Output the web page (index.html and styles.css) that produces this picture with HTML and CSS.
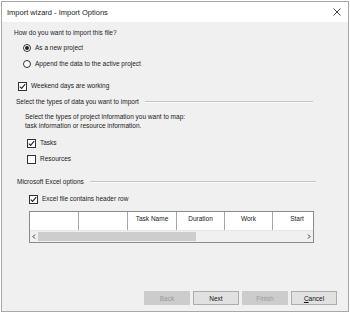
FILE: index.html
```html
<!DOCTYPE html>
<html>
<head>
<meta charset="utf-8">
<link rel="stylesheet" href="styles.css">
</head>
<body>
<div class="window">
  <div class="titlebar">
    <span class="title">Import wizard - Import Options</span>
    <svg class="close" width="8" height="8" viewBox="0 0 8 8"><path d="M0.5 0.5 L7.5 7.5 M7.5 0.5 L0.5 7.5" stroke="#444" stroke-width="1" fill="none"/></svg>
  </div>
  <div class="content">
    <div class="row heading">How do you want to import this file?</div>
    <div class="row opt r1"><span class="radio checked"></span><span>As a new project</span></div>
    <div class="row opt r2"><span class="radio"></span><span>Append the data to the active project</span></div>
    <div class="row opt weekend"><span class="check"><svg width="7" height="7" viewBox="0 0 7 7"><path d="M0.8 3.6 L2.6 5.4 L6.2 1.2" stroke="#222" stroke-width="1.1" fill="none"/></svg></span><span>Weekend days are working</span></div>
    <div class="row section s1"><span>Select the types of data you want to import</span><span class="rule"></span></div>
    <p class="para">Select the types of project information you want to map:<br>task information or resource information.</p>
    <div class="row opt tasks"><span class="check"><svg width="7" height="7" viewBox="0 0 7 7"><path d="M0.8 3.6 L2.6 5.4 L6.2 1.2" stroke="#222" stroke-width="1.1" fill="none"/></svg></span><span>Tasks</span></div>
    <div class="row opt resources"><span class="check"></span><span>Resources</span></div>
    <div class="row section s2"><span>Microsoft Excel options</span><span class="rule"></span></div>
    <div class="row opt excel"><span class="check"><svg width="7" height="7" viewBox="0 0 7 7"><path d="M0.8 3.6 L2.6 5.4 L6.2 1.2" stroke="#222" stroke-width="1.1" fill="none"/></svg></span><span>Excel file contains header row</span></div>
    <div class="grid">
      <div class="grid-head">
        <div class="cell c1"></div>
        <div class="cell c2"></div>
        <div class="cell c3">Task Name</div>
        <div class="cell c4">Duration</div>
        <div class="cell c5">Work</div>
        <div class="cell c6">Start</div>
      </div>
      <div class="hscroll">
        <span class="arrow"><svg width="4" height="5" viewBox="0 0 4 5"><path d="M3 0.5 L1 2.5 L3 4.5" stroke="#333" stroke-width="1" fill="none"/></svg></span>
        <div class="track"><div class="thumb"></div></div>
        <span class="arrow"><svg width="4" height="5" viewBox="0 0 4 5"><path d="M1 0.5 L3 2.5 L1 4.5" stroke="#333" stroke-width="1" fill="none"/></svg></span>
      </div>
    </div>
    <div class="buttons">
      <button class="btn disabled">Back</button>
      <button class="btn">Next</button>
      <button class="btn disabled">Finish</button>
      <button class="btn"><u>C</u>ancel</button>
    </div>
  </div>
</div>
</body>
</html>
```
FILE: styles.css
```css
html, body {
  margin: 0;
  padding: 0;
  background: #ffffff;
}
body {
  font-family: "Liberation Sans", Arial, sans-serif;
  font-size: 6.5px;
  color: #1a1a1a;
}
.window {
  margin: 1px 0 0 1px;
  width: 346px;
  height: 309px;
  border: 1px solid #a8a8a8;
  display: flex;
  flex-direction: column;
  background: #f0f0f0;
}
.titlebar {
  height: 20px;
  background: #ffffff;
  display: flex;
  align-items: center;
  justify-content: space-between;
  padding: 0 7px 0 5px;
  flex: none;
}
.title {
  font-size: 7.5px;
  color: #222;
}
.close {
  display: block;
}
.content {
  flex: 1;
  display: flex;
  flex-direction: column;
  padding: 5px 0 6px 0;
}
.row {
  height: 12px;
  line-height: 12px;
  display: flex;
  align-items: center;
  white-space: nowrap;
}
.heading {
  margin-left: 12px;
  color: #1c1c30;
}
.opt > span:last-child {
  margin-left: 4px;
}
.r1 { margin-top: 3px; margin-left: 21px; }
.r2 { margin-top: 4px; margin-left: 21px; }
.weekend { margin-top: 10px; margin-left: 16px; }
.tasks { margin-top: 7px; margin-left: 25px; }
.resources { margin-top: 4px; margin-left: 25px; }
.excel { margin-top: 5px; margin-left: 27px; }

.radio {
  width: 8px;
  height: 8px;
  border: 1px solid #333;
  border-radius: 50%;
  background: #fff;
  box-sizing: border-box;
  display: flex;
  align-items: center;
  justify-content: center;
  flex: none;
}
.radio.checked::after {
  content: "";
  width: 4px;
  height: 4px;
  border-radius: 50%;
  background: #222;
}
.check {
  width: 9px;
  height: 9px;
  border: 1px solid #333;
  background: #fff;
  box-sizing: border-box;
  display: flex;
  align-items: center;
  justify-content: center;
  flex: none;
}
.check svg { display: block; }

.section {
  margin-left: 14px;
  margin-right: 35px;
}
.s1 { margin-top: 4px; }
.s2 { margin-top: 11px; margin-left: 15px; margin-right: 32px; }
.rule {
  flex: 1;
  height: 1px;
  background: #c4c4c4;
  border-bottom: 1px solid #fbfbfb;
  margin-left: 6px;
}
.para {
  margin: 4px 0 0 23px;
  line-height: 9px;
}

.grid {
  margin: 6px 0 0 27px;
  width: 285px;
  height: 32px;
  box-sizing: border-box;
  border: 1px solid #8a8a8a;
  background: #fff;
  display: flex;
  flex-direction: column;
}
.grid-head {
  display: flex;
  height: 18px;
  background: #fff;
}
.cell {
  box-sizing: border-box;
  border-right: 1px solid #a6a6a6;
  text-align: center;
  padding-top: 3px;
  line-height: 8px;
  flex: none;
}
.c1 { width: 49px; }
.c2 { width: 49px; }
.c3 { width: 49px; }
.c4 { width: 48px; }
.c5 { width: 48px; }
.c6 { width: 48px; border-right: 0; }
.hscroll {
  flex: 1;
  display: flex;
  align-items: stretch;
  border-top: 1px solid #e6e6e6;
  background: #f0f0f0;
}
.arrow {
  width: 8px;
  display: flex;
  align-items: center;
  justify-content: center;
  flex: none;
}
.arrow svg { display: block; }
.track {
  flex: 1;
  display: flex;
  align-items: stretch;
  padding: 1px 0;
}
.thumb {
  width: 158px;
  background: #cdcdcd;
}

.buttons {
  margin-top: auto;
  display: flex;
  justify-content: flex-end;
  gap: 3px;
  padding-right: 11px;
}
.btn {
  width: 46px;
  height: 14px;
  padding: 0;
  margin: 0;
  box-sizing: border-box;
  font-family: "Liberation Sans", Arial, sans-serif;
  font-size: 6.5px;
  color: #111;
  background: #e1e1e1;
  border: 1px solid #adadad;
  border-radius: 0;
}
.btn.disabled {
  background: #cccccc;
  border-color: #cccccc;
  color: #9a9a9a;
}
```
